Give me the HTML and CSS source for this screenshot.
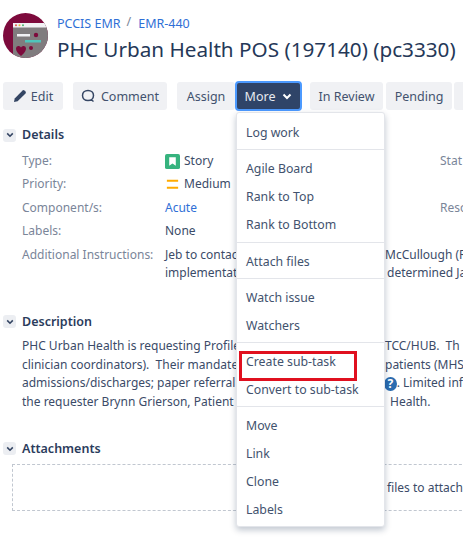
FILE: index.html
```html
<!DOCTYPE html>
<html lang="en">
<head>
    <meta charset="UTF-8">
    <meta name="viewport" content="width=device-width, initial-scale=1.0">
    <title>EMR-440 - PHC Urban Health POS</title>
    <link rel="stylesheet" href="styles.css">
</head>
<body>
    <div class="page">
        <div class="issue-header">
            <svg class="avatar" viewBox="0 0 45 45">
                <defs>
                    <clipPath id="avatarClip"><circle cx="22.5" cy="22.5" r="22.5"/></clipPath>
                </defs>
                <circle cx="22.5" cy="22.5" r="22.5" fill="#7d0a3c"/>
                <g clip-path="url(#avatarClip)">
                    <rect x="10" y="10" width="35" height="35" fill="#807c7e"/>
                    <rect x="10" y="10" width="35" height="4.5" fill="#f1f1f4"/>
                </g>
                <circle cx="13" cy="12.3" r="1" fill="#e0574a"/>
                <circle cx="16.5" cy="12.3" r="1" fill="#e8b93a"/>
                <circle cx="20" cy="12.3" r="1" fill="#4bb56d"/>
                <rect x="14" y="21" width="13" height="2.5" fill="#f1f1f4"/>
                <circle cx="33" cy="22" r="2.2" fill="#7d0a3c"/>
                <rect x="22" y="27" width="16" height="2.5" fill="#4fc6bb"/>
                <circle cx="28" cy="35" r="2" fill="#7d0a3c"/>
                <path d="M18 43C13 39 13 36 13 35.500a2.600 2.600 0 0 1 5-1 2.600 2.600 0 0 1 5 1c0 .5 0 3.500-5 7.500z" fill="#7d0a3c"/>
            </svg>
            <div class="header-text">
                <div class="breadcrumbs">
                    <a class="link">PCCIS EMR</a>
                    <span class="crumb-sep">/</span>
                    <a class="link">EMR-440</a>
                </div>
                <h1>PHC Urban Health POS (197140) (pc3330)</h1>
            </div>
        </div>

        <div class="toolbar">
            <button class="btn btn-edit">
                <svg class="btn-icon" viewBox="0 0 14 14"><path d="M1 13l.7-3.600L9.600 1.500a1.300 1.300 0 0 1 1.800 0l1.100 1.100a1.300 1.300 0 0 1 0 1.800L4.600 12.300z" fill="#344563"/></svg>
                Edit
            </button>
            <button class="btn btn-comment">
                <svg class="btn-icon" viewBox="0 0 14 14"><path d="M7 1.500c3.200 0 5.500 2.100 5.500 5s-2.300 5-5.500 5-5.500-2.100-5.500-5 2.300-5 5.500-5zM10 10.500l2.500 2" fill="none" stroke="#344563" stroke-width="1.500"/></svg>
                Comment
            </button>
            <button class="btn btn-assign">Assign</button>
            <button class="btn btn-more">
                More
                <svg class="more-chevron" viewBox="0 0 10 7"><path d="M1.500 1.500L5 5l3.500-3.500" fill="none" stroke="#fff" stroke-width="2"/></svg>
            </button>
            <button class="btn btn-review">In Review</button>
            <button class="btn btn-pending">Pending</button>
            <button class="btn btn-next"></button>
        </div>

        <div class="section section-details">
            <div class="section-title">
                <span class="toggle"><svg viewBox="0 0 10 7"><path d="M1.500 1.500L5 5l3.500-3.500" fill="none" stroke="#344563" stroke-width="2"/></svg></span>
                <h2>Details</h2>
            </div>
            <div class="details-grid">
                <div class="field-label">Type:</div>
                <div class="field-value">
                    <svg class="type-icon" viewBox="0 0 16 16">
                        <rect width="16" height="16" rx="2" fill="#36b37e"/>
                        <path d="M4.500 3.500h7v9L8 10l-3.500 2.500z" fill="#fff"/>
                    </svg>
                    Story
                </div>
                <div class="field-side">Stat</div>

                <div class="field-label">Priority:</div>
                <div class="field-value">
                    <svg class="type-icon" viewBox="0 0 16 16"><path d="M2 4h12M2 11.500h12" stroke="#ffab00" stroke-width="2"/></svg>
                    Medium
                </div>
                <div class="field-side"></div>

                <div class="field-label">Component/s:</div>
                <div class="field-value"><a class="link">Acute</a></div>
                <div class="field-side">Reso</div>

                <div class="field-label">Labels:</div>
                <div class="field-value">None</div>
                <div class="field-side"></div>

                <div class="field-label">Additional Instructions:</div>
                <div class="field-value field-long">
                    <div class="long-line"><span class="long-left">Jeb to contact</span><span>McCullough (R</span></div>
                    <div class="long-line"><span class="long-left">implementation</span><span class="long-shift">determined Ja</span></div>
                </div>
            </div>
        </div>

        <div class="section section-description">
            <div class="section-title">
                <span class="toggle"><svg viewBox="0 0 10 7"><path d="M1.500 1.500L5 5l3.500-3.500" fill="none" stroke="#344563" stroke-width="2"/></svg></span>
                <h2>Description</h2>
            </div>
            <div class="desc">
                <div class="desc-line"><span class="desc-left">PHC Urban Health is requesting Profile</span><span>TCC/HUB.&nbsp; Th</span></div>
                <div class="desc-line"><span class="desc-left">clinician coordinators).&nbsp; Their mandate</span><span>patients (MHS</span></div>
                <div class="desc-line"><span class="desc-left desc-left-help">admissions/discharges; paper referral</span><span class="help-dot">?</span><span>. Limited inf</span></div>
                <div class="desc-line"><span class="desc-left">the requester Brynn Grierson, Patient</span><span class="desc-shift">Health.</span></div>
            </div>
        </div>

        <div class="section section-attachments">
            <div class="section-title">
                <span class="toggle"><svg viewBox="0 0 10 7"><path d="M1.500 1.500L5 5l3.500-3.500" fill="none" stroke="#344563" stroke-width="2"/></svg></span>
                <h2>Attachments</h2>
            </div>
            <div class="dropzone">files to attach</div>
        </div>

        <div class="more-menu">
            <ul class="menu-group">
                <li>Log work</li>
            </ul>
            <ul class="menu-group">
                <li>Agile Board</li>
                <li>Rank to Top</li>
                <li>Rank to Bottom</li>
            </ul>
            <ul class="menu-group">
                <li>Attach files</li>
            </ul>
            <ul class="menu-group">
                <li>Watch issue</li>
                <li>Watchers</li>
            </ul>
            <ul class="menu-group">
                <li>Create sub-task</li>
                <li>Convert to sub-task</li>
            </ul>
            <ul class="menu-group">
                <li>Move</li>
                <li>Link</li>
                <li>Clone</li>
                <li>Labels</li>
            </ul>
        </div>
        <div class="callout"></div>
    </div>
</body>
</html>
```

FILE: styles.css
```css
* {
    box-sizing: border-box;
}
html, body {
    height: 100%;
}
body {
    margin: 0;
    background-color: #fff;
    font-family: "Noto Sans", "Open Sans", Arial, sans-serif;
    font-size: 12px;
    color: #3b4b68;
    overflow: hidden;
}
.page {
    position: relative;
    width: 463px;
    height: 541px;
    overflow: hidden;
    padding: 13px 0 0 3px;
}
.link {
    color: #2f6fd6;
}

/* header */
.issue-header {
    display: flex;
    gap: 9px;
    height: 45px;
}
.avatar {
    width: 45px;
    height: 45px;
    flex: none;
}
.header-text {
    white-space: nowrap;
}
.breadcrumbs {
    display: flex;
    gap: 6px;
    font-size: 12.5px;
    line-height: 22px;
}
.crumb-sep {
    color: #7a869a;
    margin-top: -2px;
    margin-right: 1px;
}
h1 {
    margin: 0;
    font-size: 20.7px;
    font-weight: 400;
    line-height: 29px;
    color: #253858;
}

/* toolbar */
.toolbar {
    display: flex;
    margin-top: 24px;
    height: 28px;
}
.btn {
    display: flex;
    align-items: center;
    justify-content: center;
    gap: 4px;
    height: 28px;
    padding: 0;
    border: none;
    border-radius: 3px;
    background-color: #f0f1f4;
    font-family: inherit;
    font-size: 12.5px;
    color: #42526e;
    flex: none;
}
.btn-icon {
    width: 14px;
    height: 14px;
}
.btn-edit {
    width: 60px;
}
.btn-comment {
    width: 94px;
    margin-left: 10px;
    gap: 6px;
}
.btn-assign {
    width: 58px;
    margin-left: 10px;
}
.btn-more {
    width: 65px;
    margin-left: 1px;
    gap: 7px;
    background-color: #2f4468;
    color: #e8ebf1;
    outline: 2px solid #4c9aff;
    outline-offset: -1px;
}
.more-chevron {
    width: 10px;
    height: 7px;
}
.btn-review {
    width: 73px;
    margin-left: 9px;
}
.btn-pending {
    width: 66px;
    margin-left: 3px;
}
.btn-next {
    width: 20px;
    margin-left: 2px;
}

/* sections */
.section {
    white-space: nowrap;
}
.section-title {
    display: flex;
    align-items: center;
    gap: 6px;
    height: 16px;
}
.toggle {
    display: flex;
    align-items: center;
    justify-content: center;
    width: 13px;
    height: 13px;
    border-radius: 3px;
    background-color: #eceef2;
}
.toggle svg {
    width: 8px;
    height: 6px;
}
h2 {
    margin: 0;
    font-size: 12.5px;
    font-weight: 600;
    line-height: 16px;
    color: #2b3c5c;
}
.section-details {
    margin-top: 17px;
}
.details-grid {
    display: grid;
    grid-template-columns: 143px 275px 40px;
    grid-auto-rows: 23.4px;
    margin: 9px 0 0 19px;
    line-height: 18px;
}
.field-label {
    color: #7a8599;
}
.field-value {
    display: flex;
    align-items: flex-start;
    gap: 4px;
}
.type-icon {
    width: 15px;
    height: 15px;
    margin-top: 2px;
    flex: none;
}
.field-side {
    color: #7a8599;
}
.field-long {
    display: block;
    grid-column: 2 / 4;
}
.long-line {
    display: flex;
    height: 18.5px;
}
.long-left {
    width: 220px;
    flex: none;
}
.long-shift {
    margin-left: 2px;
}
.section-description {
    margin-top: 45px;
}
.desc {
    margin: 7px 0 0 19px;
    line-height: 18.7px;
}
.desc-line {
    display: flex;
    align-items: center;
    height: 18.7px;
}
.desc-left {
    width: 363px;
    flex: none;
}
.desc-left-help {
    width: 362px;
}
.desc-shift {
    margin-left: 5px;
}
.help-dot {
    width: 14px;
    height: 14px;
    border-radius: 50%;
    background-color: #2b6cb0;
    color: #fff;
    font-size: 12px;
    font-weight: 700;
    line-height: 14px;
    text-align: center;
}
.section-attachments {
    margin-top: 29px;
}
.dropzone {
    height: 47px;
    width: 470px;
    margin: 7px 0 0 9px;
    padding-left: 374px;
    border: 1px dashed #c1c7d0;
    line-height: 45px;
}

/* More dropdown */
.more-menu {
    position: absolute;
    left: 236px;
    top: 112px;
    width: 149px;
    height: 415px;
    padding-top: 1px;
    background-color: #fff;
    border: 1px solid #e3e5ea;
    border-radius: 3px;
    box-shadow: 0 3px 6px rgba(9, 30, 66, 0.25);
    color: #42526e;
    font-size: 12.3px;
}
.menu-group {
    list-style: none;
    margin: 0;
    padding: 5px 0 2.3px;
    border-bottom: 1px solid #e3e5ea;
}
.menu-group:last-child {
    border-bottom: none;
}
.menu-group li {
    height: 28px;
    padding-left: 9px;
    line-height: 27px;
    white-space: nowrap;
}
.callout {
    position: absolute;
    left: 239px;
    top: 351px;
    width: 118px;
    height: 30px;
    border: 3px solid #e0101f;
}
```
